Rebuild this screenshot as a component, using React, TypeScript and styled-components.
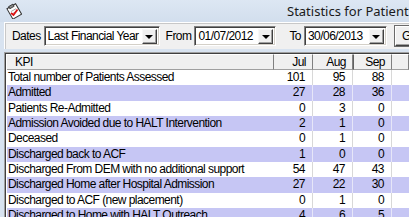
import * as React from "react";
import styled, { createGlobalStyle } from "styled-components";

const GlobalStyle = createGlobalStyle`
  html, body {
    margin: 0;
    padding: 0;
    background: #d8e3f0;
    overflow: hidden;
  }
`;

const Window = styled.div`
  width: 409px;
  height: 217px;
  overflow: hidden;
  display: flex;
  flex-direction: column;
  background: #d8e3f0;
  font-family: "Liberation Sans", Arial, sans-serif;
  font-size: 12px;
  letter-spacing: -0.55px;
  color: #000;
`;

const TitleBar = styled.div`
  height: 22px;
  flex: none;
  display: flex;
  align-items: center;
  background: linear-gradient(#dde7f3, #d2deed);
  white-space: nowrap;
`;

const AppIcon = styled.svg`
  width: 16px;
  height: 16px;
  margin-left: 6px;
  flex: none;
`;

const Title = styled.span`
  margin-left: 265px;
  font-family: "Noto Sans", "Open Sans", sans-serif;
  font-size: 13px;
  letter-spacing: 0;
  color: #1a1a1a;
`;

const Body = styled.div`
  flex: 1;
  display: flex;
  flex-direction: column;
  padding-left: 4px;
  min-height: 0;
`;

const Toolbar = styled.div`
  height: 26px;
  flex: none;
  display: flex;
  align-items: center;
  background: #f0f0f0;
  border-top: 1px solid #fff;
  border-left: 1px solid #fff;
  box-shadow: inset 1px 1px 0 #c8c8c8;
  padding-left: 7px;
  white-space: nowrap;
`;

const Label = styled.span<{ $gap?: number }>`
  margin-left: ${p => p.$gap ?? 0}px;
  margin-right: 3px;
`;

const Combo = styled.div<{ $width: number }>`
  width: ${p => p.$width}px;
  height: 20px;
  box-sizing: border-box;
  display: flex;
  align-items: center;
  background: #fff;
  border: 1px solid;
  border-color: #808080 #fff #fff #808080;
  box-shadow: inset 1px 1px 0 #404040, inset -1px -1px 0 #d4d0c8;
  padding: 2px 2px 2px 3px;
  flex: none;
`;

const ComboText = styled.span`
  flex: 1;
  overflow: hidden;
`;

const DropButton = styled.div`
  width: 15px;
  height: 15px;
  box-sizing: border-box;
  display: flex;
  align-items: center;
  justify-content: center;
  background: #f0f0f0;
  border: 1px solid;
  border-color: #f8f8f8 #404040 #404040 #f8f8f8;
  box-shadow: inset -1px -1px 0 #a0a0a0;
  &::after {
    content: "";
    border-left: 4px solid transparent;
    border-right: 4px solid transparent;
    border-top: 4px solid #000;
    margin-top: 1px;
  }
`;

const GoButton = styled.div`
  margin-left: 8px;
  height: 20px;
  width: 40px;
  box-sizing: border-box;
  flex: none;
  display: flex;
  align-items: center;
  padding-left: 6px;
  background: #f0f0f0;
  border: 1px solid;
  border-color: #fff #404040 #404040 #fff;
  box-shadow: inset -1px -1px 0 #a0a0a0, 0 0 0 1px #6a6a6a;
`;

const Grid = styled.div`
  margin-top: 3px;
  flex: 1;
  display: grid;
  grid-template-columns: 267px 39px 40px 39px 1fr;
  grid-auto-rows: 15.33px;
  grid-template-rows: 16px;
  align-content: start;
  background: #fff;
  border-top: 1px solid #a0a0a0;
  border-left: 1px solid #a0a0a0;
  box-shadow: inset 1px 1px 0 #404040;
  padding: 1px 0 0 2px;
  white-space: nowrap;
`;

const HeadCell = styled.div<{ $right?: boolean; $strong?: boolean }>`
  background: #f0f0f0;
  border-top: 1px solid #fff;
  border-bottom: 1px solid #a0a0a0;
  border-right: 1px solid #808080;
  border-left: ${p => (p.$strong ? "1px solid #606060" : "none")};
  box-sizing: border-box;
  line-height: 14px;
  padding: ${p => (p.$right ? "0 6px 0 0" : "0 0 0 8px")};
  text-align: ${p => (p.$right ? "right" : "left")};
  overflow: hidden;
`;

const Cell = styled.div<{ $band: boolean; $num?: boolean }>`
  background: ${p => (p.$band ? "#c6c6f4" : "#fff")};
  border-right: 1px solid ${p => (p.$num ? (p.$band ? "#e6e6f8" : "#d8d8d8") : "transparent")};
  line-height: 15px;
  padding: ${p => (p.$num ? "0 7px 0 0" : "0 0 0 1px")};
  text-align: ${p => (p.$num ? "right" : "left")};
  overflow: visible;
  position: relative;
`;

const Filler = styled.div<{ $band: boolean }>`
  background: ${p => (p.$band ? "#c6c6f4" : "#fff")};
`;

const rows: [string, number, number, number][] = [
  ["Total number of Patients Assessed", 101, 95, 88],
  ["Admitted", 27, 28, 36],
  ["Patients Re-Admitted", 0, 3, 0],
  ["Admission Avoided due to HALT Intervention", 2, 1, 0],
  ["Deceased", 0, 1, 0],
  ["Discharged back to ACF", 1, 0, 0],
  ["Discharged From DEM with no additional support", 54, 47, 43],
  ["Discharged Home after Hospital Admission", 27, 22, 30],
  ["Discharged to ACF (new placement)", 0, 1, 0],
  ["Discharged to Home with HALT Outreach", 4, 6, 5],
];

const App = () => {
  return (
    <Window>
      <GlobalStyle />
      <TitleBar>
        <AppIcon viewBox="0 0 16 16">
          <g transform="rotate(-30 8 8)">
            <rect x="3" y="2.5" width="10" height="12" fill="#fff" stroke="#333" strokeWidth="1" />
            <rect x="5.5" y="1.5" width="5" height="2.5" fill="#888" stroke="#222" strokeWidth="0.7" />
            <line x1="5" y1="7" x2="11" y2="7" stroke="#999" strokeWidth="0.8" />
            <line x1="5" y1="9.5" x2="11" y2="9.5" stroke="#999" strokeWidth="0.8" />
          </g>
          <path d="M5 10 L7.5 12 L11.5 6.5" fill="none" stroke="#d11" strokeWidth="1.8" />
        </AppIcon>
        <Title>Statistics for Patients Assessed</Title>
      </TitleBar>
      <Body>
        <Toolbar>
          <Label>Dates</Label>
          <Combo $width={116}>
            <ComboText>Last Financial Year</ComboText>
            <DropButton />
          </Combo>
          <Label $gap={6}>From</Label>
          <Combo $width={82}>
            <ComboText>01/07/2012</ComboText>
            <DropButton />
          </Combo>
          <Label $gap={13}>To</Label>
          <Combo $width={83}>
            <ComboText>30/06/2013</ComboText>
            <DropButton />
          </Combo>
          <GoButton>Go</GoButton>
        </Toolbar>
        <Grid>
          <HeadCell>KPI</HeadCell>
          <HeadCell $right>Jul</HeadCell>
          <HeadCell $right>Aug</HeadCell>
          <HeadCell $right $strong>Sep</HeadCell>
          <HeadCell />
          {rows.map(([label, jul, aug, sep], i) => {
            const band = i % 2 === 1;
            return (
              <React.Fragment key={label}>
                <Cell $band={band}>{label}</Cell>
                <Cell $band={band} $num>{jul}</Cell>
                <Cell $band={band} $num>{aug}</Cell>
                <Cell $band={band} $num>{sep}</Cell>
                <Filler $band={band} />
              </React.Fragment>
            );
          })}
        </Grid>
      </Body>
    </Window>
  );
};

export default App;
